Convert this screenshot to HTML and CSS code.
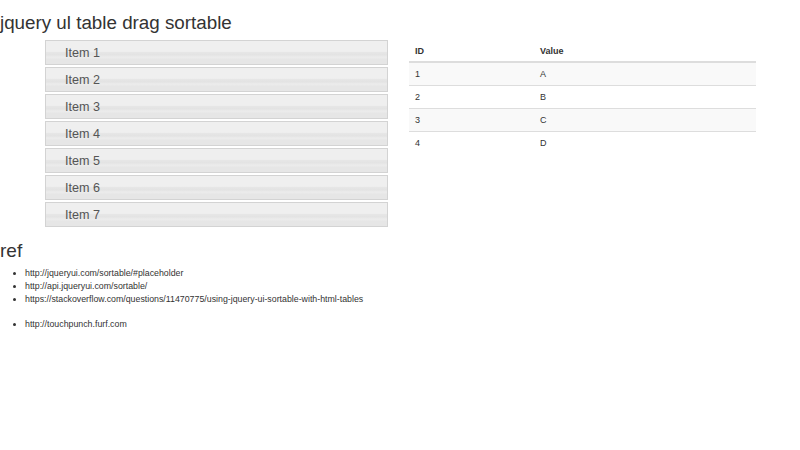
FILE: index.html
```html
<!DOCTYPE html>
<html lang="en">
<head>
    <meta charset="UTF-8">
    <title>jquery ul table drag sortable</title>
    <link rel="stylesheet" href="styles.css">
</head>
<body>
    <h1>jquery ul table drag sortable</h1>

    <div class="row">
        <ul id="sortable">
            <li class="ui-state-default">Item 1</li>
            <li class="ui-state-default">Item 2</li>
            <li class="ui-state-default">Item 3</li>
            <li class="ui-state-default">Item 4</li>
            <li class="ui-state-default">Item 5</li>
            <li class="ui-state-default">Item 6</li>
            <li class="ui-state-default">Item 7</li>
        </ul>

        <table class="table table-striped">
            <thead>
                <tr><th>ID</th><th>Value</th></tr>
            </thead>
            <tbody>
                <tr><td>1</td><td>A</td></tr>
                <tr><td>2</td><td>B</td></tr>
                <tr><td>3</td><td>C</td></tr>
                <tr><td>4</td><td>D</td></tr>
            </tbody>
        </table>
    </div>

    <h2>ref</h2>
    <ul class="refs">
        <li>http://jqueryui.com/sortable/#placeholder</li>
        <li>http://api.jqueryui.com/sortable/</li>
        <li>https://stackoverflow.com/questions/11470775/using-jquery-ui-sortable-with-html-tables</li>
    </ul>
    <ul class="refs">
        <li>http://touchpunch.furf.com</li>
    </ul>
</body>
</html>
```

FILE: styles.css
```css
body { margin: 0; font-family: "Liberation Sans", Arial, sans-serif; font-size: 9px; color: #333; background: #fff; }
h1 { font-size: 18.8px; font-weight: normal; margin: 11px 0 5px; line-height: 24px; }
h2 { font-size: 19px; font-weight: normal; margin: 10px 0 4px; line-height: 24px; }

.row { display: flex; align-items: flex-start; }

#sortable { list-style: none; margin: 0; padding: 0 0 0 45px; width: 343px; }
#sortable li { box-sizing: border-box; height: 25px; margin-bottom: 2px; padding: 1px 0 0 19px; font-size: 12.6px; line-height: 23px; color: #555; border: 1px solid #d3d3d3; background: linear-gradient(to bottom, #efefef 0%, #efefef 45%, #e6e6e6 50%, #e3e3e3 60%, #ececec 70%, #e6e6e6 80%, #e6e6e6 100%); }

.table { border-collapse: collapse; width: 347px; margin: 1px 0 0 21px; }
.table th, .table td { text-align: left; padding: 0 6px; height: 22px; border-top: 1px solid #ddd; }
.table th { font-weight: bold; border-top: 0; border-bottom: 2px solid #ddd; height: 20px; }
.table th:first-child, .table td:first-child { width: 113px; }
.table-striped tbody tr:nth-child(odd) { background: #f9f9f9; }

.refs { margin: 0 0 12px; padding-left: 25px; font-size: 8.8px; line-height: 13px; }
```
